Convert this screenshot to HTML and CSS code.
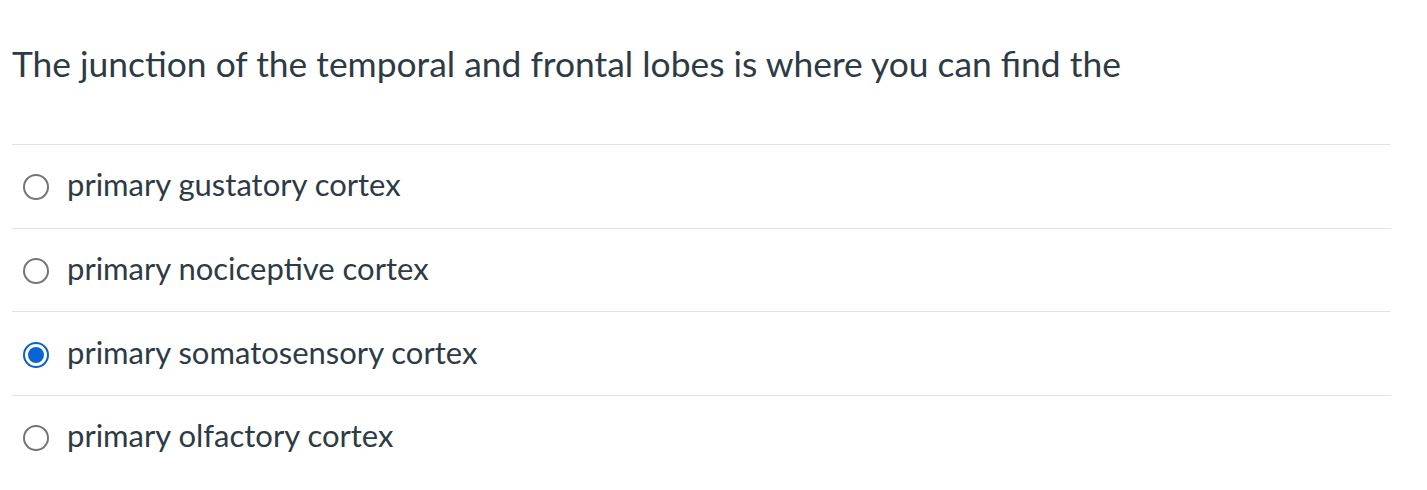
FILE: index.html
```html
<!DOCTYPE html>
<html>
<head>
<meta charset="utf-8">
<link rel="stylesheet" href="styles.css">
</head>
<body>
<div class="question">
  <div class="question-text">The junction of the temporal and frontal lobes is where you can find the</div>
  <div class="answers">
    <label class="answer"><span class="radio"></span><span class="answer-text">primary gustatory cortex</span></label>
    <label class="answer"><span class="radio"></span><span class="answer-text">primary nociceptive cortex</span></label>
    <label class="answer"><span class="radio checked"></span><span class="answer-text">primary somatosensory cortex</span></label>
    <label class="answer"><span class="radio"></span><span class="answer-text">primary olfactory cortex</span></label>
  </div>
</div>
</body>
</html>
```
FILE: styles.css
```css
html, body {
  margin: 0;
  padding: 0;
  background: #ffffff;
}
body {
  font-family: Lato, "Liberation Sans", sans-serif;
  color: #2d3b45;
}
.question {
  padding: 39px 36px 0 12px;
}
.question-text {
  font-size: 35.4px;
  line-height: 50px;
  padding-bottom: 55px;
}
.answers {
  display: flex;
  flex-direction: column;
}
.answer {
  display: flex;
  align-items: center;
  gap: 18px;
  height: 82.67px;
  border-top: 1px solid #e3e3e3;
  padding-left: 11px;
  font-size: 31px;
}
.answer-text {
  position: relative;
  top: -2px;
}
.radio {
  width: 22px;
  height: 22px;
  border: 2px solid #757575;
  border-radius: 50%;
  flex: none;
  box-sizing: content-box;
  position: relative;
  top: 1px;
}
.radio.checked {
  border-color: #0a63d2;
}
.radio.checked::after {
  content: "";
  position: absolute;
  left: 3px;
  top: 3px;
  width: 16px;
  height: 16px;
  border-radius: 50%;
  background: #0a63d2;
}
```
